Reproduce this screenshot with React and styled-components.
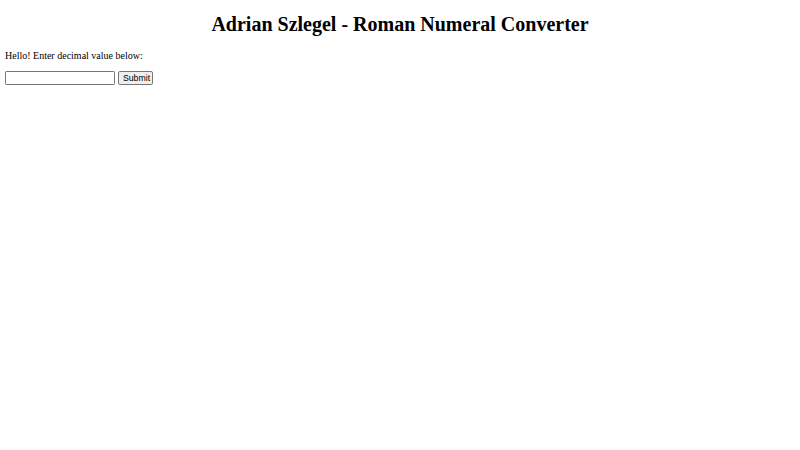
import React, { useState } from "react";
import styled, { createGlobalStyle } from "styled-components";

const GlobalStyle = createGlobalStyle`
  html, body {
    margin: 0;
    background: #fff;
  }
`;

const toRoman = (num) => {
  const table = [
    [1000, "M"], [900, "CM"], [500, "D"], [400, "CD"],
    [100, "C"], [90, "XC"], [50, "L"], [40, "XL"],
    [10, "X"], [9, "IX"], [5, "V"], [4, "IV"], [1, "I"],
  ];
  let out = "";
  let n = num;
  for (const [value, letters] of table) {
    while (n >= value) {
      out += letters;
      n -= value;
    }
  }
  return out;
};

const App = () => {
  const [value, setValue] = useState("");
  const [result, setResult] = useState("");

  const handleSubmit = (e) => {
    e.preventDefault();
    const n = parseInt(value, 10);
    if (!n || n < 1 || n > 3999) {
      setResult("Please enter a number between 1 and 3999.");
      return;
    }
    setResult(toRoman(n));
  };

  return (
    <Page>
      <GlobalStyle />
      <Title>Adrian Szlegel - Roman Numeral Converter</Title>
      <P>Hello! Enter decimal value below:</P>
      <Form onSubmit={handleSubmit}>
        <Input
          type="text"
          value={value}
          onChange={(e) => setValue(e.target.value)}
        />
        <Button type="submit">Submit</Button>
      </Form>
      {result && <P>{result}</P>}
    </Page>
  );
};

export default App;

// the whole page is shown scaled down (1280 -> 800 wide)
const Page = styled.div`
  zoom: 0.625;
  padding: 8px;
  font-family: "Liberation Serif", "Times New Roman", serif;
  font-size: 16px;
  color: #000;
`;

const Title = styled.h1`
  text-align: center;
  font-size: 32px;
  font-weight: bold;
  margin: 13.44px 0 21.44px;
`;

const P = styled.p`
  margin: 16px 0;
`;

const Form = styled.form`
  display: flex;
  align-items: center;
  gap: 5px;
`;

const Input = styled.input`
  box-sizing: border-box;
  width: 176px;
  height: 21px;
  padding: 1px 2px;
  border: 1px solid #767676;
  border-radius: 2px;
  font-family: "Liberation Sans", Arial, sans-serif;
  font-size: 13.33px;
`;

const Button = styled.button`
  box-sizing: border-box;
  width: 56px;
  height: 23px;
  padding: 1px 6px;
  border: 1px solid #767676;
  border-radius: 3px;
  background: #efefef;
  color: #000;
  font-family: "Liberation Sans", Arial, sans-serif;
  font-size: 14px;
`;
